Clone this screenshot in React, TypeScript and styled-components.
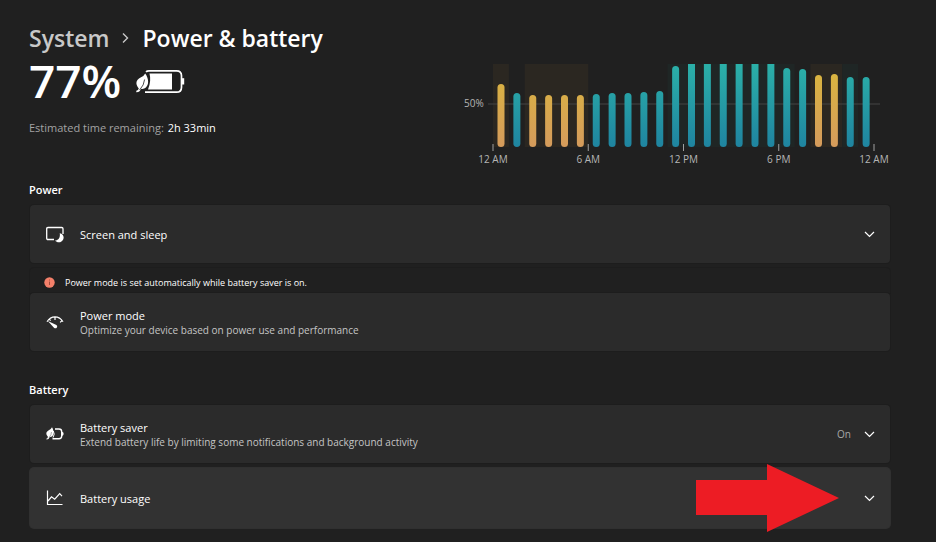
import React from "react";
import styled, { createGlobalStyle } from "styled-components";

const GlobalStyle = createGlobalStyle`
  *, *::before, *::after { box-sizing: border-box; }
  body {
    margin: 0;
    background: #202020;
    color: #fff;
    font-family: "Open Sans", "Noto Sans", sans-serif;
    font-size: 11px;
  }
  h1, h2, p { margin: 0; }
`;

const Page = styled.main`
  padding: 20px 46px 14px 29px;
`;

const Breadcrumb = styled.nav`
  display: flex;
  align-items: center;
  gap: 12px;
  height: 36px;
  font-size: 23px;
  font-weight: 600;
  line-height: 34px;
`;

const Crumb = styled.a`
  color: #c8c8c8;
  text-decoration: none;
`;

const PageTitle = styled.h1`
  font: inherit;
`;

const Hero = styled.section`
  display: flex;
  justify-content: space-between;
  height: 123px;
`;

const Charge = styled.div`
  display: flex;
  align-items: center;
  gap: 15px;
  height: 52px;
  font-size: 46px;
  font-weight: 600;
  line-height: 48px;
`;

const Percent = styled.span`
  height: 52px;
`;

const Remaining = styled.p`
  margin-top: 11px;
  color: #a3a3a3;
  line-height: 18px;
  strong {
    margin-left: 1px;
    color: #fff;
    font-weight: 400;
  }
`;

const Chart = styled.svg`
  flex: none;
  margin-top: 4px;
  text {
    fill: #b5b5b5;
    font-size: 10px;
  }
`;

const Heading = styled.h2`
  height: 26px;
  font-size: 11px;
  font-weight: 600;
  line-height: 22px;
`;

const Group = styled.section`
  display: flex;
  flex-direction: column;
  & + & { margin-top: 28px; }
`;

const Stack = styled.div`
  display: flex;
  flex-direction: column;
  gap: 5px;
  margin-left: 1px;
`;

const Card = styled.div<{ $active?: boolean }>`
  position: relative;
  display: flex;
  align-items: center;
  width: 100%;
  height: ${(p) => (p.$active ? 60 : 58)}px;
  padding: 0 14px 0 16px;
  border: 0;
  border-radius: 4px;
  background: ${(p) => (p.$active ? "#323232" : "#2b2b2b")};
  box-shadow: 0 0 0 1px ${(p) => (p.$active ? "#303030" : "#1d1d1d")};
  color: #fff;
  font: inherit;
  text-align: left;
`;

const Notice = styled.div`
  display: flex;
  align-items: center;
  gap: 10px;
  height: 25px;
  padding: 3px 14px 0;
  border-radius: 4px 4px 0 0;
  box-shadow: 0 0 0 1px #1d1d1d;
  font-size: 9px;
`;

const Labels = styled.span`
  display: flex;
  flex: 1;
  flex-direction: column;
  margin-left: 16px;
  padding-top: 1px;
`;

const Label = styled.span`
  font-size: 11px;
  line-height: 15px;
`;

const Detail = styled.span`
  color: #c5c5c5;
  font-size: 10px;
  line-height: 14px;
`;

const Status = styled.span`
  margin-right: 11px;
  color: #a8a8a8;
  font-size: 10px;
`;

const Arrow = styled.svg`
  position: absolute;
  top: -5px;
  right: 51px;
  pointer-events: none;
`;

const Chevron = () => (
  <svg width="14" height="14" viewBox="0 0 14 14" fill="none" stroke="#fff" strokeWidth="1.2" aria-hidden="true">
    <path d="M3 5 7.500 9.500 12 5" />
  </svg>
);

const BatteryIcon = () => (
  <svg width="50" height="28" viewBox="0 0 50 28" aria-hidden="true">
    <path d="M10 3.8Q11 2.8 13 2.8H40.500Q45.500 2.800 45.500 7.800V19.200Q45.500 24.200 40.500 24.200H9" fill="none" stroke="#fff" strokeWidth="1.7" />
    <path d="M46 10.200H48.200V16.500H46Z" fill="#fff" />
    <path d="M13.500 5.500H36V21.500H12Q15.500 13 13.500 5.500Z" fill="#fff" />
    <path d="M9.200 5.500C13.500 11.500 13 18.500 8.200 20.600Q6.300 21.400 5.100 20.800Q3.600 24.500.3 24.300V22.700Q2.400 22.400 2.800 20.600C-1.800 15 1 11.200 4.600 9.600Q7.900 8.200 9.200 5.500Z" fill="#fff" />
    <path d="M8.600 11.500Q8.200 17 3.600 22" fill="none" stroke="#202020" strokeWidth=".8" />
  </svg>
);

const ScreenIcon = () => (
  <svg width="18" height="18" viewBox="0 0 18 18" aria-hidden="true">
    <path d="M8 14.500H2Q.7 14.500.7 13.200V3.800Q.7 2.500 2 2.500H15.700Q17 2.500 17 3.800V9" fill="none" stroke="#fff" strokeWidth="1.300" />
    <path d="M13.700 8.300C17 8.800 18.300 11.500 17.300 14.200C16 17.600 11.500 18.500 9 15.600C12.700 15.600 14.500 12.100 13.700 8.300Z" fill="#fff" />
  </svg>
);

const GaugeIcon = () => (
  <svg width="18" height="18" viewBox="0 0 18 18" aria-hidden="true">
    <path d="M1 8.700C5 2.200 13 2.200 17 8.700M9 4V7M3.200 6.200 4.600 7.600M16.200 7.500 14.100 9.400" fill="none" stroke="#fff" strokeWidth="1.200" />
    <path d="M1.800 8 10.400 12Q11.800 13 10.900 14.400Q9.800 15.900 8.200 14.900Z" fill="#fff" />
  </svg>
);

const SaverIcon = () => (
  <svg width="18" height="18" viewBox="0 0 18 18" aria-hidden="true">
    <path d="M9 4H13Q15.700 4 15.700 6.700V11Q15.700 13.700 13 13.700H6.500" fill="none" stroke="#fff" strokeWidth="1.400" />
    <path d="M15.700 6.900H16.500Q17.600 7.100 17.600 8.800T16.500 10.700H15.700Z" fill="#fff" />
    <path d="M6 2.200C8.700 6.800 8 11.600 3.800 12.100Q2.600 14.800.5 14.600V13.600Q1.700 13.500 1.900 11.700C-.7 9 .2 6.600 2.800 5.300Q5 4.100 6 2.200Z" fill="#fff" />
    <path d="M7.300 6Q9.300 9 7 12.600" fill="none" stroke="#fff" />
    <path d="M5.500 7Q5.500 9.800 3.100 12.500" fill="none" stroke="#2b2b2b" strokeWidth=".4" />
  </svg>
);

const UsageIcon = () => (
  <svg width="18" height="18" viewBox="0 0 18 18" fill="none" stroke="#fff" strokeWidth="1.200" aria-hidden="true">
    <path d="M1.500 1.500V15.500H16.500M2 12 5.500 7.800 8.700 10.200 13.700 4.700 16 7.100" />
  </svg>
);

const NoticeIcon = () => (
  <svg width="11" height="11" viewBox="0 0 11 11" aria-hidden="true">
    <circle cx="5.500" cy="5.500" r="5.200" fill="#f4806a" />
    <path d="M5.500 2.500V3.500M5.500 4.600V8" stroke="#a04c3d" />
  </svg>
);

const BASE = 87;
const STEP = 15.875;
const ORIGIN = 33;

const levels = [
  63, 54, 52, 52, 52, 52, 53, 54, 54, 55, 56, 81,
  83, 83, 83, 83, 83, 83, 79, 78, 72, 73, 70, 70,
];
const saverHours = [0, 2, 3, 4, 5, 20, 21];

const shades = [
  { from: 0, to: 1, fill: "#2b2721" },
  { from: 2, to: 6, fill: "#2b2721" },
  { from: 11, to: 19, fill: "#1f2625" },
  { from: 20, to: 22, fill: "#2b2721" },
  { from: 22, to: 23, fill: "#1f2625" },
];
const hours = ["12 AM", "6 AM", "12 PM", "6 PM", "12 AM"];

const barPath = (hour: number, level: number) => {
  const x = ORIGIN + STEP * hour + 4.5;
  const top = BASE - level;
  const cap = level >= 83 ? `V${top}H${x + 7}` : `V${top + 3.5}a3.5 3.5 0 0 1 7 0`;
  return `M${x} ${BASE - 3.5}${cap}V${BASE - 3.5}a3.5 3.5 0 0 1 -7 0Z`;
};

const LevelChart = () => (
  <Chart width="430" height="110" viewBox="0 0 430 110" role="img" aria-label="Battery level, last 24 hours">
    <defs>
      <linearGradient id="teal" gradientUnits="userSpaceOnUse" x1="0" y1="4" x2="0" y2="87">
        <stop offset="0" stopColor="#2bb0a8" />
        <stop offset="1" stopColor="#1f84a0" />
      </linearGradient>
      <linearGradient id="amber" gradientUnits="userSpaceOnUse" x1="0" y1="14" x2="0" y2="87">
        <stop offset="0" stopColor="#dab440" />
        <stop offset="1" stopColor="#d59b5c" />
      </linearGradient>
    </defs>
    {shades.map((s) => (
      <rect key={s.from} x={ORIGIN + STEP * s.from} y="4" width={STEP * (s.to - s.from)} height="83" fill={s.fill} />
    ))}
    <path d="M28 44H420" stroke="#444" />
    {levels.map((level, hour) => (
      <path key={hour} d={barPath(hour, level)} fill={saverHours.includes(hour) ? "url(#amber)" : "url(#teal)"} />
    ))}
    <text x="4" y="47">50%</text>
    {hours.map((label, i) => (
      <g key={i}>
        <path d={`M${ORIGIN + STEP * 6 * i} 84v7`} stroke="#a0a0a0" />
        <text x={ORIGIN + STEP * 6 * i} y="103" textAnchor="middle">{label}</text>
      </g>
    ))}
  </Chart>
);

export default function App() {
  return (
    <Page>
      <GlobalStyle />
      <Breadcrumb aria-label="Breadcrumb">
        <Crumb href="#system">System</Crumb>
        <svg width="9" height="12" viewBox="0 0 9 12" fill="none" stroke="#c8c8c8" strokeWidth="1.400" aria-hidden="true">
          <path d="M2 1.500 6.500 6 2 10.500" />
        </svg>
        <PageTitle>Power &amp; battery</PageTitle>
      </Breadcrumb>
      <Hero>
        <div>
          <Charge>
            <Percent>77%</Percent>
            <BatteryIcon />
          </Charge>
          <Remaining>
            Estimated time remaining: <strong>2h 33min</strong>
          </Remaining>
        </div>
        <LevelChart />
      </Hero>
      <Group>
        <Heading>Power</Heading>
        <Stack>
          <Card as="button" type="button">
            <ScreenIcon />
            <Labels><Label>Screen and sleep</Label></Labels>
            <Chevron />
          </Card>
          <div>
            <Notice role="status">
              <NoticeIcon />
              Power mode is set automatically while battery saver is on.
            </Notice>
            <Card>
              <GaugeIcon />
              <Labels>
                <Label>Power mode</Label>
                <Detail>Optimize your device based on power use and performance</Detail>
              </Labels>
            </Card>
          </div>
        </Stack>
      </Group>
      <Group>
        <Heading>Battery</Heading>
        <Stack>
          <Card as="button" type="button">
            <SaverIcon />
            <Labels>
              <Label>Battery saver</Label>
              <Detail>Extend battery life by limiting some notifications and background activity</Detail>
            </Labels>
            <Status>On</Status>
            <Chevron />
          </Card>
          <Card as="button" type="button" $active>
            <UsageIcon />
            <Labels><Label>Battery usage</Label></Labels>
            <Chevron />
            <Arrow width="143" height="70" viewBox="0 0 143 70" aria-hidden="true">
              <path d="M0 17H71V1L143 35L71 69V52H0Z" fill="#ed1c24" />
            </Arrow>
          </Card>
        </Stack>
      </Group>
    </Page>
  );
}
